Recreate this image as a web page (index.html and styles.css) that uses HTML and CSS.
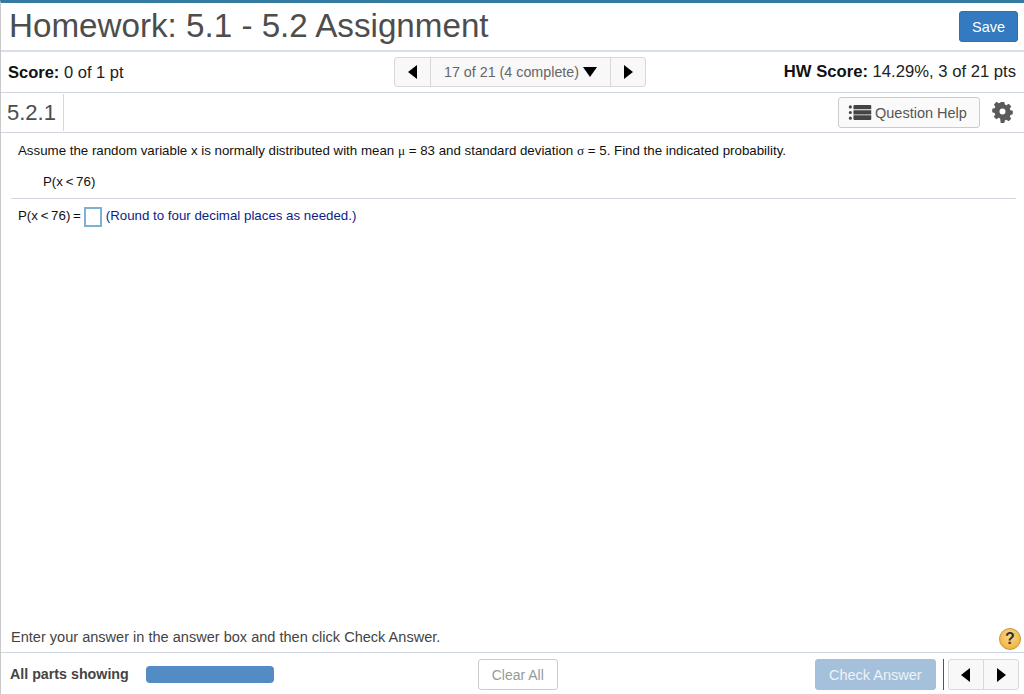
FILE: index.html
```html
<!DOCTYPE html>
<html lang="en">
<head>
<meta charset="utf-8">
<title>Homework: 5.1 - 5.2 Assignment</title>
<link rel="stylesheet" href="styles.css">
</head>
<body>
<div class="page">
  <header class="title-bar">
    <h1 class="title">Homework: 5.1 - 5.2 Assignment</h1>
    <button class="btn btn-save">Save</button>
  </header>
  <div class="score-bar">
    <div class="score"><b>Score:</b> 0 of 1 pt</div>
    <div class="pager">
      <span class="pager-cell pager-arrow"><svg class="tri" viewBox="0 0 10 14"><path d="M9 0V14L0 7Z"/></svg></span>
      <span class="pager-cell pager-label">17 of 21 (4 complete)<svg class="tri-down" viewBox="0 0 14 10"><path d="M0 0H14L7 10Z"/></svg></span>
      <span class="pager-cell pager-arrow"><svg class="tri" viewBox="0 0 10 14"><path d="M1 0V14L10 7Z"/></svg></span>
    </div>
    <div class="hw-score"><b>HW Score:</b> 14.29%, 3 of 21 pts</div>
  </div>
  <div class="question-bar">
    <div class="q-number">5.2.1</div>
    <button class="btn btn-help">
      <svg class="list-icon" viewBox="0 0 24 16"><path d="M0 2a1.700 1.700 0 1 1 3.400 0a1.700 1.700 0 1 1-3.400 0ZM0 8a1.700 1.700 0 1 1 3.400 0a1.700 1.700 0 1 1-3.400 0ZM0 14a1.700 1.700 0 1 1 3.400 0a1.700 1.700 0 1 1-3.400 0ZM6 0H23Q24 0 24 1V4.500H5V1Q5 0 6 0ZM5 5.500H24V10H5ZM5 11H24V15Q24 16 23 16H6Q5 16 5 15Z"/></svg>Question Help
    </button>
    <svg class="gear" viewBox="0 0 24 24"><path fill-rule="evenodd" d="M9.700 0h4.600l.7 3.300 1.900.8 2.900-1.800 3.200 3.200-1.800 2.900.8 1.900 3 .7v4.600l-3 .7-.8 1.900 1.800 2.900-3.200 3.200-2.900-1.800-1.900.8-.7 3.200H9.700L9 20.800l-1.900-.8-2.900 1.800L1 18.600l1.800-2.900-.8-1.900-3-.7V8.500l3-.7.800-1.900L1.200 3 4.400-.2l2.900 1.800 1.900-.8ZM12 8.200a3.800 3.800 0 1 0 0 7.600a3.800 3.800 0 1 0 0-7.600Z"/></svg>
  </div>
  <main class="question">
    <p class="prompt">Assume the random variable x is normally distributed with mean <span class="greek">μ</span> = 83 and standard deviation <span class="greek">σ</span> = 5. Find the indicated probability.</p>
    <p class="given">P(x &lt; 76)</p>
    <div class="answer-row">
      <span class="expr">P(x &lt; 76) =</span>
      <span class="answer-box"></span>
      <span class="hint">(Round to four decimal places as needed.)</span>
    </div>
  </main>
  <div class="instruction">
    <span class="instruction-text">Enter your answer in the answer box and then click Check Answer.</span>
    <span class="help-dot">?</span>
  </div>
  <footer class="action-bar">
    <b class="parts">All parts showing</b>
    <span class="progress"></span>
    <button class="btn btn-clear">Clear All</button>
    <button class="btn btn-check">Check Answer</button>
    <span class="divider"></span>
    <div class="pager pager-small">
      <span class="pager-cell pager-arrow"><svg class="tri" viewBox="0 0 10 14"><path d="M9 0V14L0 7Z"/></svg></span>
      <span class="pager-cell pager-arrow"><svg class="tri" viewBox="0 0 10 14"><path d="M1 0V14L10 7Z"/></svg></span>
    </div>
  </footer>
</div>
</body>
</html>
```
FILE: styles.css
```css
* { box-sizing: border-box; }
html, body { margin: 0; padding: 0; background: #fff; }
body { font-family: "Liberation Sans", Arial, sans-serif; color: #333; overflow: hidden; }
.page {
  width: 1024px; height: 694px;
  display: flex; flex-direction: column;
  border-top: 3px solid #337ba1;
  border-left: 1px solid #c9c9c9;
}
.title-bar {
  height: 49px; flex: none;
  display: flex; align-items: center; justify-content: space-between;
  padding: 0 6px 0 8px;
  border-bottom: 2px solid #d9dfe8;
}
.title { margin: 0 0 2px; font-size: 33.200px; font-weight: 400; color: #4d4d4d; line-height: 44px; }
.btn {
  font-family: inherit; font-size: 14px; border-radius: 3px;
  border: 1px solid #ccc; background: #fff; color: #555; padding: 0; cursor: pointer;
}
.btn-save {
  width: 59px; height: 31px;
  background: #337ac0; border-color: #2e6fb0; color: #fff; font-size: 14.500px;
}
.score-bar {
  height: 41px; flex: none;
  display: grid; grid-template-columns: 1fr auto 1fr; align-items: center;
  padding: 0 8px 0 7px;
  border-bottom: 1px solid #cfd6e2;
  font-size: 16.500px; color: #222;
}
.score b, .hw-score b { color: #111; }
.hw-score { text-align: right; font-size: 16.650px; }
.pager {
  display: flex; height: 30px;
  border: 1px solid #d8d8d8; border-radius: 3px;
  background: #f8f8f8;
  margin-left: 16px;
}
.pager-cell { display: flex; align-items: center; justify-content: center; }
.pager-arrow { width: 35px; }
.pager-arrow + .pager-label { border-left: 1px solid #d8d8d8; }
.pager-label + .pager-arrow { border-left: 1px solid #d8d8d8; }
.pager-arrow + .pager-arrow { border-left: 1px solid #d8d8d8; }
.pager-label { width: 180px; font-size: 14.300px; color: #666; }
.tri { width: 10px; height: 14px; fill: #000; }
.tri-down { width: 14px; height: 10px; fill: #000; margin-left: 4px; }
.question-bar {
  height: 40px; flex: none;
  display: flex; align-items: center;
  padding: 0 12px 0 0;
  border-bottom: 1px solid #cfd6e2;
}
.q-number {
  width: 63px; height: 37px;
  font-size: 22px; line-height: 37px; color: #4d4d4d;
  padding-left: 6px;
  border-right: 1px solid #d3d8e0;
}
.btn-help {
  margin-left: auto; width: 142px; height: 31px;
  display: flex; align-items: center; gap: 3px;
  padding-left: 9px;
  background: #fafafa; font-size: 14.500px; color: #555;
}
.list-icon { width: 24px; height: 15px; fill: #444; }
.gear { width: 19px; height: 19px; fill: #5a5a5a; margin: 0 0 2px 13px; overflow: visible; }
.question { flex: 1; padding: 11px 8px 0 10px; font-size: 13.300px; color: #111; }
.prompt { margin: 0 0 0 7px; line-height: 14px; }
.greek { font-family: "Liberation Serif", serif; }
.given { margin: 17px 0 0 32px; line-height: 14px; word-spacing: -1px; }
.answer-row {
  display: flex; align-items: center; margin-top: 9px; padding: 8px 0 0 7px;
  border-top: 1px solid #cfd6e2;
}
.expr { word-spacing: -1px; margin-bottom: 3px; }
.answer-box { width: 18px; height: 20px; border: 2px solid #7fb0d0; margin: 0 4px 0 3px; }
.hint { color: #0b1e8a; margin-bottom: 3px; }
.instruction {
  height: 24px; flex: none;
  display: flex; align-items: flex-start; justify-content: space-between;
  padding: 0 3px 0 10px;
  font-size: 14.550px; color: #444;
}
.instruction-text { line-height: 18px; }
.help-dot {
  width: 22px; height: 22px; border-radius: 50%;
  background: radial-gradient(circle at 50% 35%, #fbd98a, #eda92e);
  border: 1px solid #c79538;
  color: #333; font-weight: 700; font-size: 16px; line-height: 20px; text-align: center;
}
.action-bar {
  height: 42px; flex: none;
  display: flex; align-items: center;
  padding: 2px 5px 0 9px;
  border-top: 1px solid #cfd6e2;
}
.parts { font-size: 14.250px; color: #444; margin-bottom: 2px; }
.progress { width: 128px; height: 17px; margin-left: 17px; border-radius: 4px; background: #538bc5; }
.btn-clear { width: 80px; height: 31px; margin-left: 204px; font-size: 14px; color: #999; background: #fff; }
.btn-check { width: 121px; height: 31px; margin-left: 257px; background: #a4c0da; border-color: #a4c0da; color: #eef3f8; font-size: 14.500px; }
.divider { width: 1px; height: 31px; background: #555; margin-left: 7px; }
.pager-small { margin-left: 4px; height: 31px; width: 71px; }
.pager-small .pager-arrow { width: 35px; }
```
